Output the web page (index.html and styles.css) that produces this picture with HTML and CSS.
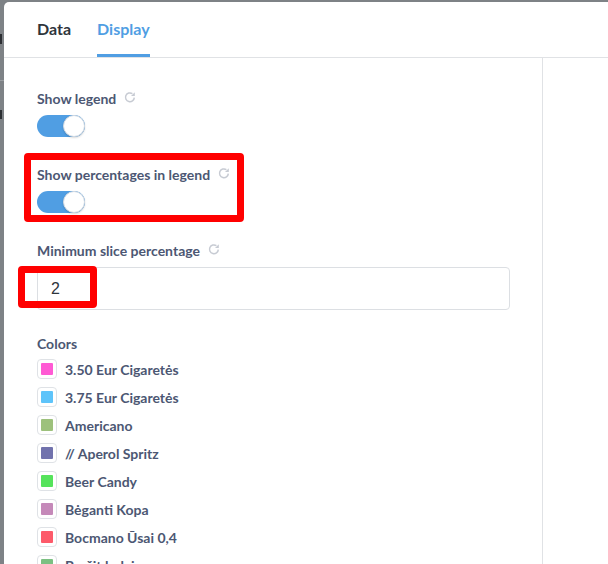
FILE: index.html
```html
<!DOCTYPE html>
<html>
<head>
<meta charset="utf-8">
<link rel="stylesheet" href="styles.css">
</head>
<body>
<div class="backdrop">
  <span class="bg-mark bg-i1"></span>
  <span class="bg-line"></span>
  <span class="bg-mark bg-i2"></span>
</div>
<div class="modal">
  <div class="tabs">
    <div class="tab">Data</div>
    <div class="tab active">Display</div>
  </div>
  <div class="panes">
    <div class="settings">
      <div class="field">
        <div class="label">Show legend <svg class="reset" viewBox="0 0 12 12"><path d="M10.3 6.6 A4.4 4.4 0 1 1 8.4 2.7" /><polygon points="10.8,1.2 10.8,5 7.0,5" /></svg></div>
        <div class="toggle"><span class="knob"></span></div>
      </div>
      <div class="field">
        <div class="label">Show percentages in legend <svg class="reset" viewBox="0 0 12 12"><path d="M10.3 6.6 A4.4 4.4 0 1 1 8.4 2.7" /><polygon points="10.8,1.2 10.8,5 7.0,5" /></svg></div>
        <div class="toggle"><span class="knob"></span></div>
      </div>
      <div class="field">
        <div class="label">Minimum slice percentage <svg class="reset" viewBox="0 0 12 12"><path d="M10.3 6.6 A4.4 4.4 0 1 1 8.4 2.7" /><polygon points="10.8,1.2 10.8,5 7.0,5" /></svg></div>
        <div class="input">2</div>
      </div>
      <div class="colors">
        <div class="colors-title">Colors</div>
        <div class="row"><span class="swatch"><span class="chip c1"></span></span>3.50 Eur Cigaretės</div>
        <div class="row"><span class="swatch"><span class="chip c2"></span></span>3.75 Eur Cigaretės</div>
        <div class="row"><span class="swatch"><span class="chip c3"></span></span>Americano</div>
        <div class="row"><span class="swatch"><span class="chip c4"></span></span>// Aperol Spritz</div>
        <div class="row"><span class="swatch"><span class="chip c5"></span></span>Beer Candy</div>
        <div class="row"><span class="swatch"><span class="chip c6"></span></span>Bėganti Kopa</div>
        <div class="row"><span class="swatch"><span class="chip c7"></span></span>Bocmano Ūsai 0,4</div>
        <div class="row"><span class="swatch"><span class="chip c8"></span></span>Bražit ledai</div>
      </div>
    </div>
    <div class="preview"></div>
  </div>
  <div class="annot annot-1"></div>
  <div class="annot annot-2"></div>
</div>
</body>
</html>
```
FILE: styles.css
```css
html, body {
  margin: 0;
  padding: 0;
  height: 100%;
  overflow: hidden;
}
body {
  background: #7e8286;
  font-family: Lato, "Noto Sans", sans-serif;
  position: relative;
}
.backdrop {
  position: absolute;
  left: 0;
  top: 0;
  width: 4px;
  height: 100%;
}
.bg-mark {
  position: absolute;
  left: 0;
  width: 2px;
  background: #2c2f33;
}
.bg-i1 { top: 34px; height: 10px; }
.bg-i2 { top: 110px; height: 9px; }
.bg-line {
  position: absolute;
  left: 0;
  top: 80px;
  width: 4px;
  height: 1px;
  background: #9a9ea2;
}
.modal {
  position: relative;
  margin: 2px 0 0 4px;
  height: 562px;
  background: #fff;
  border-top-left-radius: 5px;
  display: flex;
  flex-direction: column;
}
.tabs {
  display: flex;
  gap: 26px;
  padding-left: 33px;
  border-bottom: 1px solid #e0e2e5;
  height: 55px;
}
.tab {
  box-sizing: border-box;
  height: 55px;
  padding-top: 17px;
  font-size: 16px;
  line-height: 20px;
  font-weight: 700;
  color: #2e353b;
  border-bottom: 3px solid transparent;
}
.tab.active {
  color: #509ee3;
  border-bottom-color: #509ee3;
}
.panes {
  display: flex;
  flex: 1;
}
.settings {
  box-sizing: border-box;
  width: 539px;
  padding: 31px 32px 0 33px;
  border-right: 1px solid #e0e2e5;
}
.preview {
  flex: 1;
}
.field {
  margin-bottom: 28px;
}
.label {
  display: flex;
  align-items: center;
  font-size: 14px;
  line-height: 20px;
  font-weight: 700;
  color: #4c5773;
  margin-bottom: 6px;
}
.reset {
  width: 12px;
  height: 12px;
  margin-left: 8px;
  margin-top: -4px;
}
.reset path {
  fill: none;
  stroke: #c7cbd3;
  stroke-width: 1.5;
}
.reset polygon {
  fill: #c7cbd3;
}
.toggle {
  position: relative;
  width: 48px;
  height: 22px;
  border-radius: 11px;
  background: #509ee3;
}
.knob {
  position: absolute;
  right: 0;
  top: 0;
  width: 22px;
  height: 22px;
  border-radius: 50%;
  background: #fff;
  box-sizing: border-box;
  border: 1px solid #d4dbe3;
  box-shadow: 0 1px 2px rgba(0,0,0,0.15);
}
.field:nth-child(3) {
  margin-bottom: 24px;
}
.input {
  box-sizing: border-box;
  height: 43px;
  border: 1px solid #dcdfe3;
  border-radius: 4px;
  padding-left: 13px;
  display: flex;
  align-items: center;
  font-family: "Liberation Sans", Arial, sans-serif;
  font-size: 16px;
  color: #2e353b;
}
.colors-title {
  font-size: 14px;
  line-height: 20px;
  color: #4c5773;
  font-weight: 700;
  margin-bottom: 1px;
}
.row {
  display: flex;
  align-items: center;
  height: 28px;
  font-size: 14px;
  font-weight: 700;
  color: #4c5773;
}
.swatch {
  box-sizing: border-box;
  width: 20px;
  height: 20px;
  border: 1px solid #dfe2e6;
  border-radius: 4px;
  padding: 3px;
  margin-right: 8px;
  display: flex;
}
.chip {
  width: 12px;
  height: 12px;
  border-radius: 1px;
}
.c1 { background: #ff5ad4; }
.c2 { background: #5ec4fa; }
.c3 { background: #9dc17c; }
.c4 { background: #7172ad; }
.c5 { background: #55e35b; }
.c6 { background: #c589b9; }
.c7 { background: #fd5a6a; }
.c8 { background: #7bc082; }
.annot {
  position: absolute;
  box-sizing: border-box;
  border: 7px solid #ff0000;
  border-radius: 4px;
}
.annot-1 {
  left: 20px;
  top: 151px;
  width: 220px;
  height: 69px;
}
.annot-2 {
  left: 14px;
  top: 264px;
  width: 79px;
  height: 42px;
}
```
